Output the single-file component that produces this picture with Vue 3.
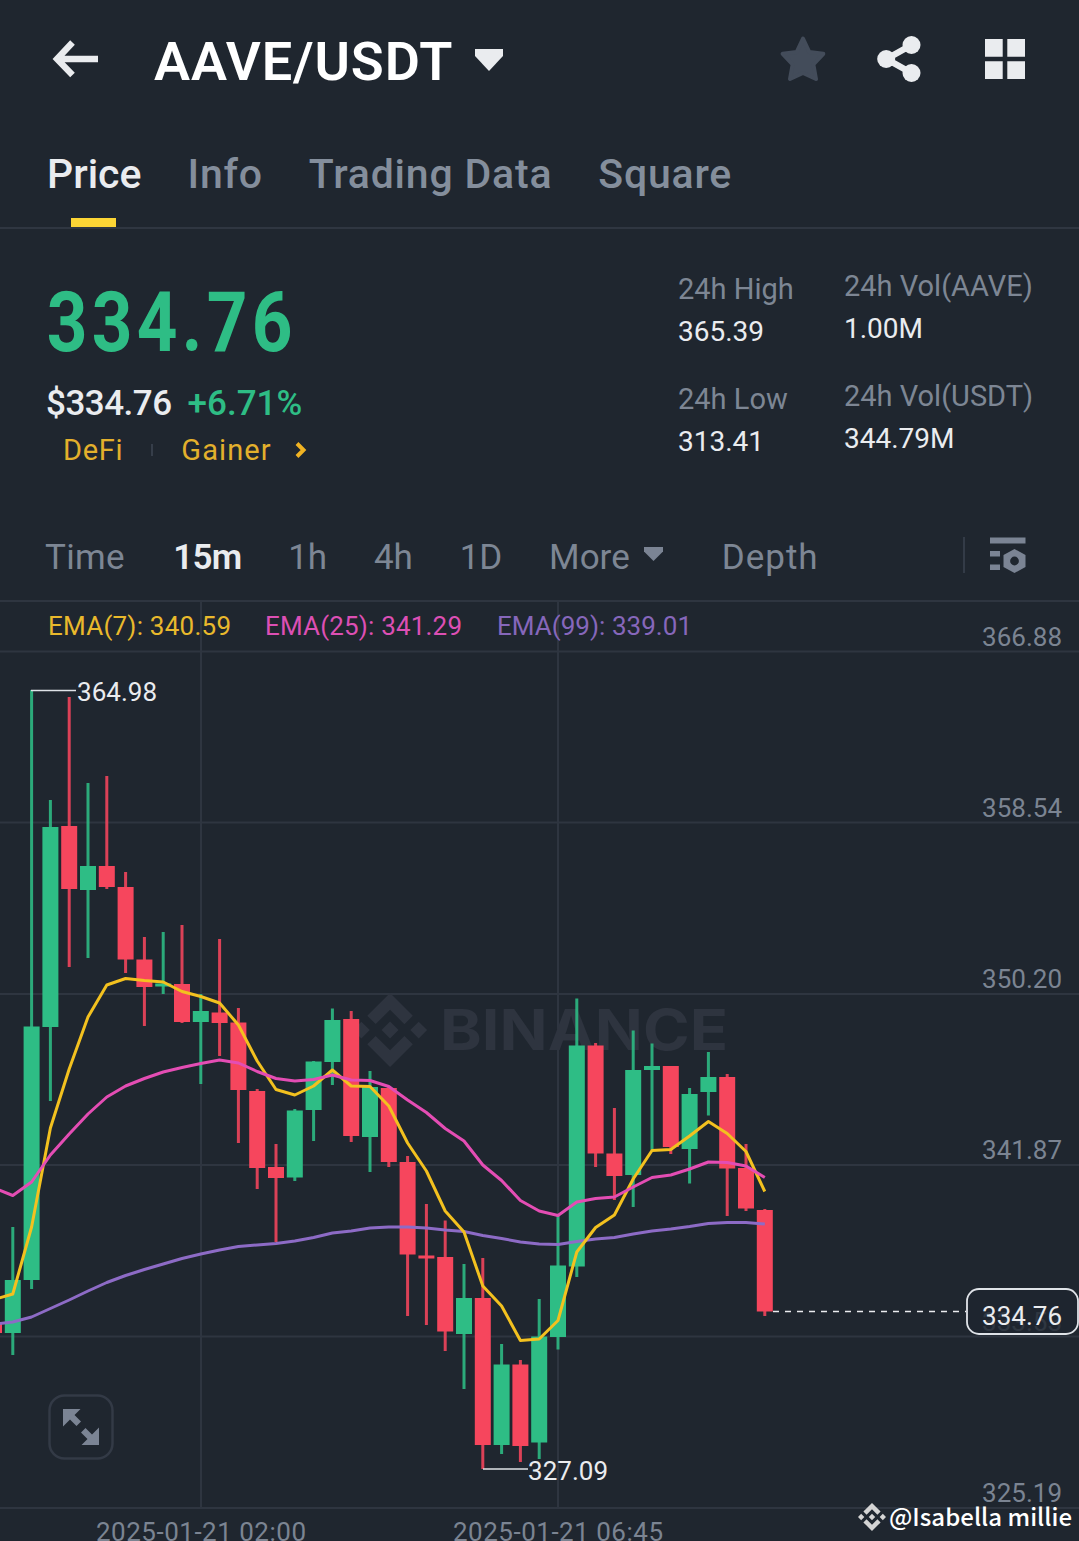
<template>
  <div class="page">
    <header class="header">
      <svg class="icon-back" viewBox="0 0 48 48" width="48" height="48">
        <path d="M20.5 7.5 L5 24 L20.5 40 M5 24 H46" fill="none" stroke="#eaecef" stroke-width="6.4" />
      </svg>
      <h1 class="pair">AAVE/USDT</h1>
      <svg class="pair-caret" viewBox="0 0 28 22" width="28" height="22">
        <path d="M0 0 H28 V7 L14 22 L0 7 Z" fill="#eaecef" />
      </svg>
      <div class="actions">
        <svg viewBox="0 0 46 48" width="46" height="48">
          <path d="M23 3.5 L29.3 17 L43.3 18.8 L33.4 29.5 L36 44 L23 38 L10 44 L12.6 29.5 L2.7 18.8 L16.7 17 Z" fill="#434c5a" stroke="#434c5a" stroke-width="4" stroke-linejoin="round" />
        </svg>
        <svg viewBox="0 0 44 46" width="44" height="46">
          <path d="M34.5 9 L9.5 23 L34.5 37" fill="none" stroke="#eaecef" stroke-width="6.5" />
          <circle cx="34.5" cy="9" r="9" fill="#eaecef" />
          <circle cx="9.2" cy="23" r="9" fill="#eaecef" />
          <circle cx="34.5" cy="37" r="9" fill="#eaecef" />
        </svg>
        <svg viewBox="0 0 40 40" width="40" height="40">
          <path d="M0 0 H17.7 V17.7 H0 Z M22.3 0 H40 V17.7 H22.3 Z M0 22.3 H17.7 V40 H0 Z M22.3 22.3 H40 V40 H22.3 Z" fill="#eaecef" />
        </svg>
      </div>
    </header>

    <nav class="tabs">
      <span v-for="tab in tabs" :key="tab" class="tab" :class="{ active: tab === activeTab }" @click="activeTab = tab">{{ tab }}</span>
    </nav>

    <section class="summary">
      <div class="price-box">
        <div class="price">334.76</div>
        <div class="price-sub">
          <span class="fiat">$334.76</span>
          <span class="change">+6.71%</span>
        </div>
        <div class="tags">
          <span class="tag-defi">DeFi</span>
          <i class="tag-line"></i>
          <span class="tag-gainer">Gainer</span>
          <svg viewBox="0 0 12 16" width="12" height="16">
            <path d="M2 1.5 L8.5 8 L2 14.5" fill="none" stroke="#f0b323" stroke-width="4" />
          </svg>
        </div>
      </div>
      <div class="stats">
        <div class="stat-col" v-for="(col, i) in stats" :key="i">
          <div class="stat" v-for="item in col" :key="item.label">
            <div class="stat-label">{{ item.label }}</div>
            <div class="stat-value">{{ item.value }}</div>
          </div>
        </div>
      </div>
    </section>

    <div class="intervals">
      <span v-for="item in intervals" :key="item" class="interval" :class="{ active: item === activeInterval }" @click="activeInterval = item">{{ item }}</span>
      <span class="interval more">More
        <svg viewBox="0 0 19 14" width="19" height="14">
          <path d="M0 0 H19 V4.5 L9.5 14 L0 4.5 Z" fill="#7b8494" />
        </svg>
      </span>
      <span class="interval depth">Depth</span>
      <div class="settings">
        <svg viewBox="0 0 36 36" width="36" height="36">
          <path d="M0 0.5 H35.5 V6.5 H0 Z M0 14 H10 V19.5 H0 Z M0 27.5 H10 V33 H0 Z" fill="#7b8494" />
          <path fill-rule="evenodd" d="M24.5 12 L35.5 18 V30 L24.5 36 L13.5 30 V18 Z M24.5 19.6 A4.4 4.4 0 1 0 24.5 28.4 A4.4 4.4 0 1 0 24.5 19.6 Z" fill="#7b8494" />
        </svg>
      </div>
    </div>

    <svg class="chart" viewBox="0 600 1079 941" width="1079" height="941">
      <!-- 网格线 -->
      <g class="grid">
        <line v-for="y in gridY" :key="y" x1="0" x2="1079" :y1="y" :y2="y" />
        <line v-for="x in gridX" :key="x" :x1="x" :x2="x" y1="600" y2="1508" />
      </g>

      <!-- 水印 -->
      <g class="watermark">
        <path :d="logoPath" transform="translate(353 993) scale(0.585)" />
        <text x="440" y="1050" textLength="288" lengthAdjust="spacingAndGlyphs">BINANCE</text>
      </g>

      <!-- K线 -->
      <rect x="0" y="1324" width="2" height="9" class="down" />
      <g v-for="c in candles" :key="c.x" :class="c.type">
        <rect class="wick" :x="c.x - 1.5" :y="c.high" width="3" :height="c.low - c.high" />
        <rect :x="c.x - 8" :y="c.top" width="16" :height="c.bottom - c.top" />
      </g>

      <polyline v-for="line in lines" :key="line.color" class="ema" :points="line.points" :stroke="line.color" />

      <g class="legend">
        <text x="48" y="635" textLength="183" fill="#e9b92c">EMA(7): 340.59</text>
        <text x="265" y="635" textLength="197" fill="#dc4fb4">EMA(25): 341.29</text>
        <text x="497" y="635" textLength="195" fill="#8667bb">EMA(99): 339.01</text>
      </g>

      <!-- 最高价 / 最低价 -->
      <path class="marker" d="M31 690.5 H76 M483 1469 H528" />
      <text class="marker-text" x="77" y="701" textLength="80">364.98</text>
      <text class="marker-text" x="528" y="1480" textLength="80">327.09</text>

      <g class="axis">
        <text v-for="(p, i) in prices" :key="p" x="982" :y="gridY[i + 1] - 6" textLength="80">{{ p }}</text>
        <text x="96" y="1541" textLength="210">2025-01-21 02:00</text>
        <text x="453" y="1541" textLength="210">2025-01-21 06:45</text>
      </g>

      <!-- 当前价格 -->
      <line class="current-line" x1="773" x2="966" y1="1311.5" y2="1311.5" />
      <rect class="current-box" x="967" y="1289" width="111" height="45" rx="12" />
      <text class="marker-text" x="982" y="1325" textLength="80">334.76</text>

      <!-- 全屏按钮 -->
      <rect class="expand-box" x="49.5" y="1395.5" width="63" height="63" rx="15" />
      <path class="expand-icon" d="M63 1409 H80.5 L74.5 1415 L81 1421.5 L76.5 1426 L70 1419.5 L63 1426.5 Z M99 1445 H81.5 L87.5 1439 L81 1432.5 L85.5 1428 L92 1434.5 L99 1427.5 Z" />

      <g class="author">
        <path :d="logoPath" transform="translate(858 1503) scale(0.221)" />
        <text x="889" y="1526" textLength="183">@Isabella millie</text>
      </g>
    </svg>
  </div>
</template>

<script setup>
import { ref } from 'vue';

const tabs = ['Price', 'Info', 'Trading Data', 'Square'];
const activeTab = ref('Price');

const intervals = ['Time', '15m', '1h', '4h', '1D'];
const activeInterval = ref('15m');

const stats = [
  [
    { label: '24h High', value: '365.39' },
    { label: '24h Low', value: '313.41' },
  ],
  [
    { label: '24h Vol(AAVE)', value: '1.00M' },
    { label: '24h Vol(USDT)', value: '344.79M' },
  ],
];

const gridX = [201, 558];
const gridY = [601, 651.5, 822.5, 994, 1165, 1336.5, 1508];
const prices = ['366.88', '358.54', '350.20', '341.87', '333.53', '325.19'];

const logoPath =
  'M38.73 53.2 L63.32 28.62 L87.92 53.22 L102.22 38.91 L63.32 0 L24.42 38.9 Z M0 63.31 L14.3 49 L28.61 63.31 L14.31 77.61 Z M38.73 73.41 L63.32 98 L87.92 73.4 L102.23 87.69 L63.33 126.6 L24.43 87.72 Z M98 63.31 L112.3 49 L126.61 63.3 L112.3 77.62 Z M77.83 63.3 L63.32 48.78 L48.86 63.24 L63.32 77.79 Z';

// [涨跌, 最高, 实体上沿, 实体下沿, 最低]
const rows = [
  ['up', 1227, 1280, 1333, 1355],
  ['up', 690, 1026.5, 1280, 1289],
  ['up', 800, 827, 1027, 1101],
  ['down', 697, 826, 889, 967],
  ['up', 783, 866, 890, 958],
  ['down', 776, 866, 887, 889],
  ['down', 872, 887, 959.5, 973],
  ['down', 937, 959.5, 987, 1026],
  ['up', 932, 983.5, 986.5, 994],
  ['down', 925, 984, 1022, 1023],
  ['up', 994, 1011, 1022, 1084],
  ['down', 939, 1012.5, 1023, 1056],
  ['down', 1008, 1022.5, 1090, 1143],
  ['down', 1089, 1091, 1168, 1189],
  ['down', 1144, 1167, 1178, 1242],
  ['up', 1109, 1110.5, 1177.5, 1181],
  ['up', 1061, 1061.5, 1110, 1141],
  ['up', 1008.5, 1020, 1062, 1085],
  ['down', 1011, 1019, 1136, 1142],
  ['up', 1071, 1087, 1137, 1172],
  ['down', 1087, 1088, 1162, 1167],
  ['down', 1156, 1162, 1254.5, 1316],
  ['down', 1204, 1255.5, 1258.5, 1325],
  ['down', 1220.5, 1257, 1331.5, 1351],
  ['up', 1264, 1298, 1334, 1389],
  ['down', 1258, 1298, 1445, 1469],
  ['up', 1344, 1364.5, 1445, 1454],
  ['down', 1360, 1364.5, 1446, 1462],
  ['up', 1299, 1336.5, 1442.5, 1459],
  ['up', 1215, 1265.5, 1337, 1349.5],
  ['up', 998.5, 1045.5, 1266.5, 1277],
  ['down', 1043, 1045.5, 1153.5, 1167],
  ['down', 1108, 1153.5, 1176, 1200],
  ['up', 1030.5, 1070, 1175, 1207],
  ['up', 1043.5, 1066, 1070, 1150],
  ['down', 1066, 1066, 1147, 1154],
  ['up', 1088, 1094, 1149, 1183.5],
  ['up', 1052, 1077, 1092, 1115.5],
  ['down', 1074, 1077, 1168.5, 1216],
  ['down', 1144, 1168, 1208.5, 1211],
  ['down', 1209, 1210, 1311.5, 1316],
];

const xAt = (i) => +(12.8 + 18.8 * i).toFixed(1);

const candles = rows.map(([type, high, top, bottom, low], i) => ({
  x: xAt(i), type, high, top, bottom, low,
}));

// 第一个值是左边界上的点
const toPoints = ([first, ...rest]) => [`-1,${first}`, ...rest.map((y, i) => `${xAt(i)},${y}`)].join(' ');

const lines = [
  {
    color: '#8d6bc6',
    points: toPoints([
      1323.5, 1322, 1317, 1308.5, 1300, 1291, 1282.5, 1275.5, 1269.5, 1264, 1258.5, 1254, 1250, 1246.5, 1245,
      1243.5, 1241, 1237.5, 1233, 1231, 1228, 1227, 1227, 1228, 1230, 1231.5, 1235.5, 1238.5, 1242,
      1244, 1244.5, 1241.5, 1239, 1237.5, 1234, 1231, 1229, 1226.5, 1223.5, 1222.5, 1222.5, 1224,
    ]),
  },
  {
    color: '#f3c11f',
    points: toPoints([
      1298, 1294, 1227, 1128, 1069, 1017, 985, 978.5, 980.5, 982, 991.5, 996.5, 1003, 1025, 1061,
      1089.5, 1095, 1086, 1070, 1086, 1086.5, 1106, 1143, 1171, 1211, 1232, 1286, 1306, 1340.5,
      1339, 1320.5, 1252, 1227.5, 1215, 1179, 1150.5, 1149.5, 1136, 1121.5, 1133.5, 1151.5, 1191.5,
    ]),
  },
  {
    color: '#e44db4',
    points: toPoints([
      1190, 1195.5, 1182, 1155, 1134, 1114, 1097, 1086, 1078.5, 1072, 1067.5, 1063.5, 1060, 1063, 1071.5,
      1078.5, 1081, 1079.5, 1075, 1080, 1080.5, 1086.5, 1100, 1112.5, 1128.5, 1141, 1165, 1180.5, 1200.5,
      1211, 1215.5, 1202, 1198.5, 1197, 1187, 1177.5, 1175, 1169, 1162, 1162.5, 1166, 1177.5,
    ]),
  },
];
</script>

<style>
body {
  background-color: #1f262f;
}
</style>

<style scoped>
.page {
  width: 1079px;
  height: 1541px;
  overflow: hidden;
  background-color: #1f262f;
  color: #eaecef;
  font-family: Roboto, "Liberation Sans", sans-serif;
}

.page svg {
  display: block;
  flex-shrink: 0;
}

.header {
  display: flex;
  align-items: center;
  height: 118px;
  padding: 0 54px 0 52px;
  box-sizing: border-box;
}

.icon-back {
  margin-right: 54px;
}

.pair {
  margin: 5px 0 0;
  font-size: 54px;
  font-weight: 600;
  line-height: 60px;
  color: #fff;
  letter-spacing: 0.9px;
}

.pair-caret {
  margin: 2px 0 0 22px;
}

.actions {
  display: flex;
  align-items: center;
  margin-left: auto;
}

.actions svg:nth-child(2) {
  margin: 0 64px 0 51px;
}

.tabs {
  display: flex;
  gap: 46px;
  height: 109px;
  padding-left: 47px;
  border-bottom: 2px solid #2f3641;
}

.tab {
  position: relative;
  font-size: 41px;
  font-weight: 500;
  line-height: 112px;
  color: #848e9c;
  letter-spacing: 0.8px;
  cursor: pointer;
}

.tab.active {
  color: #eaecef;
  letter-spacing: 0;
}

.tab.active::after {
  content: '';
  position: absolute;
  left: 24px;
  bottom: 0;
  width: 45px;
  height: 9px;
  background-color: #fcd535;
}

.summary {
  display: flex;
  justify-content: space-between;
  height: 284px;
  padding: 35px 0 0 46px;
  box-sizing: border-box;
}

.price-box {
  padding-top: 15px;
}

.price {
  padding-left: 1px;
  font-size: 83px;
  font-weight: 700;
  line-height: 88px;
  color: #2ebd85;
  letter-spacing: 5px;
  transform: scaleX(0.855);
  transform-origin: left;
}

.price-sub {
  display: flex;
  gap: 16px;
  margin-top: 14px;
  font-size: 35px;
  font-weight: 500;
  line-height: 46px;
}

.fiat {
  letter-spacing: -0.5px;
}

.change {
  color: #2ebd85;
}

.tags {
  display: flex;
  align-items: center;
  padding-left: 17px;
  font-size: 29px;
  line-height: 46px;
  color: #e3b02c;
}

.tag-defi {
  letter-spacing: 0.7px;
}

.tag-gainer {
  letter-spacing: 1.1px;
}

.tag-line {
  width: 2px;
  height: 12px;
  margin: 0 28px 0 28px;
  background-color: #363e4a;
}

.tags svg {
  margin-left: 23px;
}

.stats {
  display: flex;
}

.stat-col {
  width: 166px;
  padding-top: 3px;
}

.stat-col:last-child {
  width: 235px;
  padding-top: 0;
}

.stat {
  height: 110px;
}

.stat-col:last-child .stat {
  height: 109.5px;
}

.stat-label {
  font-size: 29px;
  line-height: 44px;
  color: #7d8694;
  white-space: nowrap;
}

.stat-value {
  font-size: 28px;
  line-height: 42px;
}

.intervals {
  display: flex;
  align-items: center;
  height: 87px;
  padding: 0 53px 0 45px;
}

.interval {
  padding-top: 2px;
  font-size: 35px;
  line-height: 85px;
  color: #7d8694;
  cursor: pointer;
  margin-right: 46.8px;
}

.interval:first-child {
  margin-right: 48.5px;
  letter-spacing: 0.3px;
}

.interval.active {
  color: #eaecef;
  font-weight: 600;
  letter-spacing: -0.8px;
}

.interval.more {
  display: flex;
  align-items: center;
  gap: 14px;
  margin-right: 59px;
}

.interval.more svg {
  margin-bottom: 8px;
}

.interval.depth {
  letter-spacing: 1px;
}

.settings {
  margin: 0 0 3px auto;
  padding-left: 25px;
  border-left: 2px solid #333b47;
}

.chart {
  font-size: 26px;
}

.grid line {
  stroke: #2e3540;
  stroke-width: 2;
}

.watermark {
  fill: #2e343f;
  font-family: Inter, sans-serif;
  font-size: 56px;
  font-weight: 700;
}

.up {
  fill: #2ebd85;
}

.down {
  fill: #f6465d;
}

.wick {
  opacity: 0.88;
}

.ema {
  fill: none;
  stroke-width: 3;
  stroke-linejoin: round;
}

.marker {
  fill: none;
  stroke: #dfe3e8;
  stroke-width: 1.6;
}

.marker-text {
  fill: #eaecef;
}

.axis {
  fill: #7b8492;
}

.current-line {
  stroke: #eaecef;
  stroke-width: 1.6;
  stroke-dasharray: 6 6;
}

.current-box {
  fill: rgba(31, 38, 47, 0.82);
  stroke: #dfe3e8;
  stroke-width: 1.8;
}

.expand-box {
  fill: none;
  stroke: #333a46;
  stroke-width: 2.5;
}

.expand-icon {
  fill: #7b8494;
}

.author {
  fill: #d4d4d4;
  font-family: "Noto Sans CJK SC", sans-serif;
  font-size: 24px;
  font-weight: 500;
}

.author text {
  fill: #fff;
}
</style>
